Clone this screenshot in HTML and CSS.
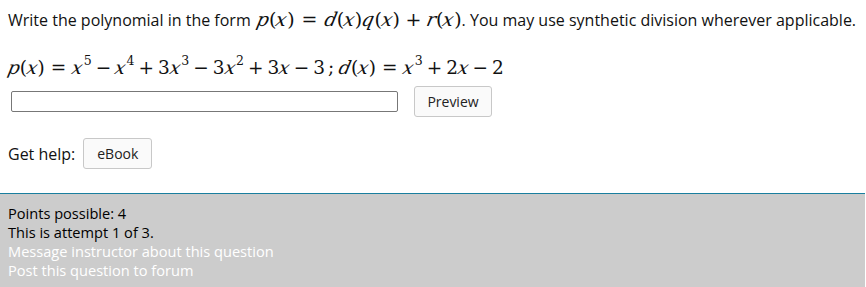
FILE: index.html
```html
<!DOCTYPE html>
<html>
<head>
<meta charset="utf-8">
<link rel="stylesheet" href="styles.css">
</head>
<body>
<div class="question">
  <p class="prompt">Write the polynomial in the form <span class="m"><i>p</i>(<i>x</i>)<span class="rel">=</span><i>d</i>(<i>x</i>)<i>q</i>(<i>x</i>)<span class="bin">+</span><i>r</i>(<i>x</i>)</span>. You may use synthetic division wherever applicable.</p>
  <p class="eq"><span class="m"><i>p</i>(<i>x</i>)<span class="rel">=</span><i>x</i><sup>5</sup><span class="bin">−</span><i>x</i><sup>4</sup><span class="bin">+</span>3<i>x</i><sup>3</sup><span class="bin">−</span>3<i>x</i><sup>2</sup><span class="bin">+</span>3<i>x</i><span class="bin">−</span>3<span class="semi">;</span><i>d</i>(<i>x</i>)<span class="rel">=</span><i>x</i><sup>3</sup><span class="bin">+</span>2<i>x</i><span class="bin">−</span>2</span></p>
  <div class="answer">
    <input class="field" type="text">
    <button class="btn preview">Preview</button>
  </div>
  <div class="help">
    <span class="help-label">Get help:</span>
    <button class="btn ebook">eBook</button>
  </div>
</div>
<div class="footer">
  <div>Points possible: 4</div>
  <div>This is attempt 1 of 3.</div>
  <a class="flink" href="#">Message instructor about this question</a>
  <a class="flink" href="#">Post this question to forum</a>
</div>
</body>
</html>
```
FILE: styles.css
```css
html, body {
  margin: 0;
  padding: 0;
  background: #fff;
}
body {
  font-family: "Open Sans", "Noto Sans", sans-serif;
  font-size: 16px;
  color: #111;
}
.question {
  padding: 0 8px;
  height: 193px;
  box-sizing: border-box;
  overflow: hidden;
}
.prompt {
  margin: 0;
  padding-top: 8px;
  line-height: 24px;
}
.m {
  font-family: "DejaVu Serif", "Liberation Serif", serif;
  font-size: 18.5px;
  line-height: 20px;
  white-space: nowrap;
}
.prompt .m {
  font-size: 19px;
  margin-left: 2px;
}
.prompt .rel {
  margin: 0 7px;
}
.prompt .bin {
  margin: 0 5.5px;
}
.m i {
  font-style: italic;
  display: inline-block;
  transform: skewX(-12deg);
}
.m sup {
  font-size: 12.5px;
  line-height: 1;
  vertical-align: 0;
  position: relative;
  top: -9px;
  margin-left: 1px;
}
.rel {
  margin: 0 6px;
}
.bin {
  margin: 0 4px;
}
.semi {
  margin: 0 5px 0 3px;
}
.eq {
  margin: 0;
  padding-top: 23px;
  line-height: 26px;
}
.answer {
  display: flex;
  align-items: center;
  margin-top: 5px;
}
.field {
  width: 387px;
  height: 21px;
  box-sizing: border-box;
  margin: 0 0 0 3px;
  border: 1px solid #777;
  border-radius: 2px;
  padding: 0;
}
.btn {
  font-family: "Open Sans", "Noto Sans", sans-serif;
  font-size: 14px;
  color: #222;
  background: #fafafa;
  border: 1px solid #c8c8c8;
  border-radius: 3px;
  height: 31px;
  padding: 0 12px;
  cursor: pointer;
}
.preview {
  margin-left: 16px;
  width: 78px;
}
.help {
  display: flex;
  align-items: center;
  margin-top: 21px;
}
.help-label {
  font-size: 16px;
}
.ebook {
  margin-left: 8px;
  width: 69px;
}
.footer {
  border-top: 1px solid #1a7f9f;
  background: #cccccc;
  margin-right: 1px;
  padding: 10px 8px 20px;
  font-size: 14.6px;
  line-height: 19px;
  color: #000;
}
.flink {
  display: block;
  color: #ffffff;
  text-decoration: none;
}
```
